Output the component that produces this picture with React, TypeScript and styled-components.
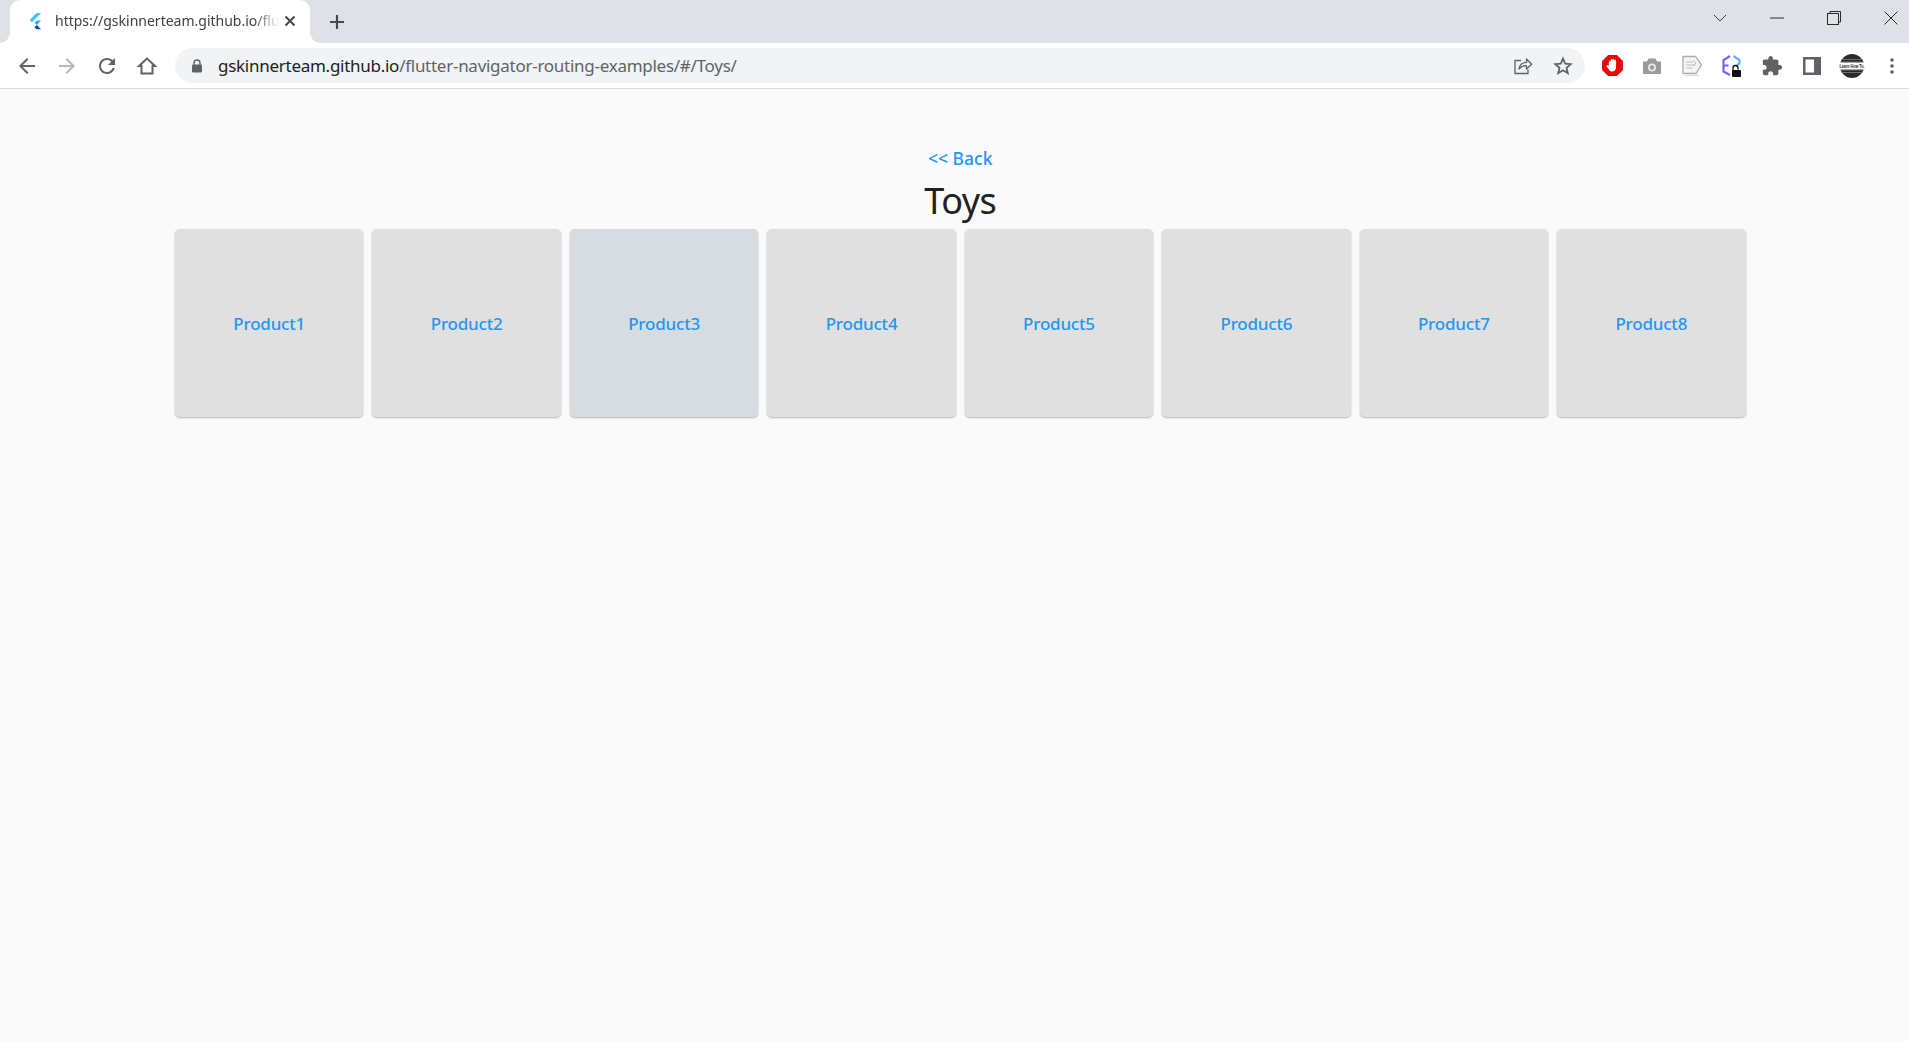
import React from "react";
import styled, { createGlobalStyle } from "styled-components";

const products = ["Product1", "Product2", "Product3", "Product4", "Product5", "Product6", "Product7", "Product8"];

const GlobalStyle = createGlobalStyle`
    html, body {
        margin: 0;
        padding: 0;
        width: 100%;
        height: 100%;
        overflow: hidden;
        background: #fafafa;
    }
    #root {
        height: 100%;
    }
`;

const Page = styled.div`
    display: flex;
    flex-direction: column;
    height: 100vh;
    font-family: "Noto Sans", "Open Sans", sans-serif;
`;

const TabStrip = styled.div`
    display: flex;
    align-items: stretch;
    height: 43px;
    padding-left: 10px;
    background: #dee1e6;
    flex: none;
`;

const Tab = styled.div`
    position: relative;
    display: flex;
    align-items: center;
    width: 300px;
    padding: 0 10px 2px 17px;
    box-sizing: border-box;
    background: #ffffff;
    border-radius: 10px 10px 0 0;
    flex: none;

    &::before,
    &::after {
        content: "";
        position: absolute;
        bottom: 0;
        width: 10px;
        height: 10px;
        background: radial-gradient(circle at var(--cx) 0, #dee1e6 9.5px, #ffffff 10px);
    }
    &::before {
        --cx: 0;
        left: -10px;
    }
    &::after {
        --cx: 100%;
        right: -10px;
    }
`;

const TabTitle = styled.span`
    flex: 1;
    min-width: 0;
    margin-left: 12px;
    overflow: hidden;
    white-space: nowrap;
    font-size: 14px;
    color: #3c4043;
    mask-image: linear-gradient(to right, #000 88%, transparent 100%);
`;

const IconSlot = styled.span<{ $width?: number; $height?: number }>`
    display: flex;
    align-items: center;
    justify-content: center;
    flex: none;
    width: ${(p) => p.$width ?? 40}px;
    height: ${(p) => p.$height ?? 36}px;
`;

const Spacer = styled.div`
    flex: 1;
`;

const WindowButton = styled.span`
    display: flex;
    align-items: center;
    justify-content: center;
    flex: none;
    width: 57px;
    height: 36px;
`;

const WindowButtons = styled.div`
    display: flex;
    margin-right: -10px;
`;

const Toolbar = styled.div`
    display: flex;
    align-items: center;
    height: 45px;
    padding-left: 7px;
    background: #ffffff;
    border-bottom: 1px solid #dadce0;
    flex: none;
`;

const Omnibox = styled.div`
    display: flex;
    align-items: center;
    flex: 0 0 1410px;
    height: 35px;
    margin: 0 7px 0 8px;
    padding: 0 2px 0 16px;
    box-sizing: border-box;
    border-radius: 18px;
    background: #f1f3f4;
`;

const Url = styled.div`
    flex: 1;
    margin-left: 15px;
    font-size: 17px;
    letter-spacing: -0.27px;
    white-space: nowrap;
    color: #5f6368;

    b {
        font-weight: 400;
        color: #202124;
    }
`;

const Main = styled.main`
    flex: 1;
    display: flex;
    flex-direction: column;
    align-items: center;
    padding: 57px 163.5px 0 175px;
    background: #fafafa;
`;

const BackLink = styled.a`
    font-size: 17.5px;
    font-weight: 500;
    line-height: 24px;
    color: #2196f3;
    cursor: pointer;
`;

const Title = styled.h1`
    margin: 5px 0 0;
    font-size: 36px;
    font-weight: 400;
    line-height: 51px;
    letter-spacing: -0.5px;
    color: #212121;
`;

const ProductGrid = styled.div`
    display: grid;
    grid-template-columns: repeat(8, 1fr);
    column-gap: 9px;
    width: 100%;
    margin-top: 3px;
`;

const ProductCard = styled.button<{ $hovered?: boolean }>`
    height: 188px;
    padding: 0;
    border: none;
    border-radius: 5px;
    background: ${(p) => (p.$hovered ? "#d7dce0" : "#e0e0e0")};
    box-shadow: 0 1px 2px rgba(0, 0, 0, 0.28);
    font-family: inherit;
    font-size: 17px;
    font-weight: 500;
    letter-spacing: -0.2px;
    color: #2196f3;
    cursor: pointer;
`;

const FlutterIcon = () => (
    <svg width="16" height="18" viewBox="0 0 16 18">
        <path d="M9.5 1h4.6L5 10.2 2.6 7.9z" fill="#42c5f5" />
        <path d="M9.5 8.6h4.6L9.8 13l-2.4-2.3z" fill="#42a5f5" />
        <path d="M7.4 15.2 9.8 13l4.3 4.2H9.5z" fill="#0d47a1" />
    </svg>
);

const CloseSmall = () => (
    <svg width="16" height="16" viewBox="0 0 16 16">
        <path d="m3.5 3.5 9 9m0-9-9 9" stroke="#45484c" strokeWidth="2" fill="none" />
    </svg>
);

const PlusIcon = () => (
    <svg width="16" height="16" viewBox="0 0 16 16">
        <path d="M8 1v14M1 8h14" stroke="#45484c" strokeWidth="2.2" fill="none" />
    </svg>
);

const MaterialIcon = ({ d, color = "#5f6368", size = 24 }: { d: string; color?: string; size?: number }) => (
    <svg width={size} height={size} viewBox="0 0 24 24">
        <path d={d} fill={color} />
    </svg>
);

const ARROW_BACK = "M20 11H7.83l5.59-5.59L12 4l-8 8 8 8 1.41-1.41L7.83 13H20v-2z";
const ARROW_FORWARD = "M4 11h12.17l-5.59-5.59L12 4l8 8-8 8-1.41-1.41L16.17 13H4v-2z";
const REFRESH =
    "M17.65 6.35C16.2 4.9 14.21 4 12 4c-4.42 0-7.99 3.58-7.99 8s3.57 8 7.99 8c3.73 0 6.84-2.55 7.73-6h-2.08c-.82 2.33-3.04 4-5.65 4-3.31 0-6-2.69-6-6s2.69-6 6-6c1.66 0 3.14.69 4.22 1.78L13 11h7V4l-2.35 2.35z";
const PUZZLE =
    "M20.5 11H19V7c0-1.1-.9-2-2-2h-4V3.5C13 2.12 11.88 1 10.5 1S8 2.12 8 3.5V5H4c-1.1 0-1.99.9-1.99 2v3.8H3.5c1.49 0 2.7 1.21 2.7 2.7s-1.21 2.7-2.7 2.7H2V20c0 1.1.9 2 2 2h3.8v-1.5c0-1.49 1.21-2.7 2.7-2.7 1.49 0 2.7 1.21 2.7 2.7V22H17c1.1 0 2-.9 2-2v-4h1.5c1.38 0 2.5-1.12 2.5-2.5S21.88 11 20.5 11z";

const HomeIcon = () => (
    <svg width="24" height="24" viewBox="0 0 24 24" fill="none">
        <path d="M12 4.5 4 12h2.5v7.5h11V12H20z" stroke="#5f6368" strokeWidth="2" strokeLinejoin="miter" />
    </svg>
);

const LockIcon = () => (
    <svg width="12" height="14" viewBox="0 0 12 14">
        <path d="M3 6V4a3 3 0 0 1 6 0v2" stroke="#5f6368" strokeWidth="1.4" fill="none" />
        <rect x="1" y="5.5" width="10" height="8" rx="1.2" fill="#5f6368" />
    </svg>
);

const ShareIcon = () => (
    <svg width="20" height="20" viewBox="0 0 20 20" fill="none" stroke="#5f6368" strokeWidth="1.3">
        <path d="M8 4.5H2v13h13v-4" />
        <path d="M6 13c.5-4 3-6.5 7.5-6.7V3l5.2 5.2-5.2 4.8V9.700c-3.500 0-5.700 1-7.500 3.300z" strokeLinejoin="round" />
    </svg>
);

const StarIcon = () => (
    <svg width="20" height="20" viewBox="0 0 20 20">
        <path
            d="m10 2.600 2.200 5.100 5.500.5-4.200 3.600 1.300 5.400L10 14.300l-4.800 2.900 1.300-5.400-4.200-3.600 5.500-.5z"
            fill="none"
            stroke="#5f6368"
            strokeWidth="1.800"
        />
    </svg>
);

const BlockerIcon = () => (
    <svg width="23" height="23" viewBox="0 0 22 22">
        <path d="M6.800 1h8.400L21 6.800v8.400L15.200 21H6.800L1 15.200V6.800z" fill="#e8090d" />
        <path
            d="M7.500 11V7.200a.9.9 0 0 1 1.700 0V10V5.700a.9.9 0 0 1 1.800 0V10V5.300a.9.9 0 0 1 1.700 0V10V6.200a.9.9 0 0 1 1.700 0v6.500c0 2.500-1.500 4-3.600 4-1.800 0-2.600-.8-3.300-2.200L5.300 12c-.5-1 .8-1.800 1.500-1z"
            fill="#ffffff"
        />
    </svg>
);

const CameraIcon = () => (
    <svg width="20" height="18" viewBox="0 0 20 18">
        <path d="M1 4.500h4L6.500 1.500h7L15 4.500h4V17H1z" fill="#9b9b9b" />
        <circle cx="10" cy="10.500" r="4" fill="#e8e8e8" />
        <circle cx="10" cy="10.500" r="2.200" fill="#9b9b9b" />
    </svg>
);

const NoteIcon = () => (
    <svg width="22" height="22" viewBox="0 0 22 22" fill="none">
        <path d="M2 1.500h12.500l6 8.500-5.500 8.500H2z" fill="#f5f5f5" stroke="#ababab" strokeWidth="1.300" />
        <path d="M5 7h7M5 10h9.500M5 13h6M12 5l3 3-3 3" stroke="#bcbcbc" strokeWidth="1" />
        <path d="M4 20.500h14" stroke="#dcdcdc" strokeWidth="1.200" />
    </svg>
);

const BracketLockIcon = () => (
    <svg width="22" height="24" viewBox="0 0 22 24" fill="none">
        <path d="M9 2 2.500 6v11.500L9 21" stroke="#7b61ff" strokeWidth="2.200" />
        <path d="M3 11.500h4.500" stroke="#7b61ff" strokeWidth="2" />
        <path d="m12.500 2 6 4v3.500l-3.500 2.500" stroke="#62b4f7" strokeWidth="2.200" />
        <path d="M11 19.500V15a2.500 2.500 0 0 1 5 0v1.500" stroke="#111111" strokeWidth="1.300" transform="translate(1 -1)" />
        <rect x="11" y="16" width="9" height="7" rx="1" fill="#111111" />
    </svg>
);

const SidePanelIcon = () => (
    <svg width="18" height="18" viewBox="0 0 18 18">
        <path fillRule="evenodd" d="M0 0h18v18H0zM2.500 2.500v13H11v-13z" fill="#5f6368" />
    </svg>
);

const ProfileBadge = () => (
    <svg width="28" height="28" viewBox="0 0 28 28">
        <circle cx="14" cy="14" r="12" fill="#2b2b2b" />
        <path d="M3 7.500h22M2 10h24M2 18h24M3 20.500h22" stroke="#8a8a8a" strokeWidth="0.700" />
        <rect x="0.500" y="10.500" width="27" height="7" rx="1" fill="#ffffff" />
        <text
            x="14"
            y="15.800"
            textAnchor="middle"
            fontSize="5"
            fontWeight="700"
            fontFamily="Liberation Sans"
            textLength="25"
            lengthAdjust="spacingAndGlyphs"
            fill="#222222"
        >
            Learn How To.
        </text>
    </svg>
);

const MoreIcon = () => (
    <svg width="6" height="18" viewBox="0 0 6 18">
        <circle cx="3" cy="3" r="1.800" fill="#5f6368" />
        <circle cx="3" cy="9" r="1.800" fill="#5f6368" />
        <circle cx="3" cy="15" r="1.800" fill="#5f6368" />
    </svg>
);

const TabStripBar = (): JSX.Element => {
    return (
        <TabStrip>
            <Tab>
                <FlutterIcon />
                <TabTitle>https://gskinnerteam.github.io/flutter-navigator</TabTitle>
                <IconSlot $width={20}>
                    <CloseSmall />
                </IconSlot>
            </Tab>
            <IconSlot $width={54} $height={43}>
                <PlusIcon />
            </IconSlot>
            <Spacer />
            <WindowButtons>
                <WindowButton>
                    <svg width="14" height="8" viewBox="0 0 14 8">
                        <path d="m1 1 6 6 6-6" stroke="#3c4043" strokeWidth="1" fill="none" />
                    </svg>
                </WindowButton>
                <WindowButton>
                    <svg width="14" height="2" viewBox="0 0 14 2">
                        <path d="M0 1h14" stroke="#2a2a2a" strokeWidth="1" />
                    </svg>
                </WindowButton>
                <WindowButton>
                    <svg width="14" height="14" viewBox="0 0 14 14" fill="none" stroke="#2a2a2a">
                        <rect x="0.500" y="2.500" width="11" height="11" />
                        <path d="M3 2.500V.5h10.500V11h-2" />
                    </svg>
                </WindowButton>
                <WindowButton>
                    <svg width="14" height="14" viewBox="0 0 14 14">
                        <path d="m.5.5 13 13m0-13-13 13" stroke="#2a2a2a" strokeWidth="1" fill="none" />
                    </svg>
                </WindowButton>
            </WindowButtons>
        </TabStrip>
    );
};

const BrowserToolbar = (): JSX.Element => {
    return (
        <Toolbar>
            <IconSlot>
                <MaterialIcon d={ARROW_BACK} />
            </IconSlot>
            <IconSlot>
                <MaterialIcon d={ARROW_FORWARD} color="#b5b7ba" />
            </IconSlot>
            <IconSlot>
                <MaterialIcon d={REFRESH} />
            </IconSlot>
            <IconSlot>
                <HomeIcon />
            </IconSlot>
            <Omnibox>
                <LockIcon />
                <Url>
                    <b>gskinnerteam.github.io</b>/flutter-navigator-routing-examples/#/Toys/
                </Url>
                <IconSlot>
                    <ShareIcon />
                </IconSlot>
                <IconSlot>
                    <StarIcon />
                </IconSlot>
            </Omnibox>
            <IconSlot>
                <BlockerIcon />
            </IconSlot>
            <IconSlot>
                <CameraIcon />
            </IconSlot>
            <IconSlot>
                <NoteIcon />
            </IconSlot>
            <IconSlot>
                <BracketLockIcon />
            </IconSlot>
            <IconSlot>
                <MaterialIcon d={PUZZLE} size={22} />
            </IconSlot>
            <IconSlot>
                <SidePanelIcon />
            </IconSlot>
            <IconSlot>
                <ProfileBadge />
            </IconSlot>
            <IconSlot>
                <MoreIcon />
            </IconSlot>
        </Toolbar>
    );
};

const App = (): JSX.Element => {
    return (
        <Page>
            <GlobalStyle />
            <TabStripBar />
            <BrowserToolbar />
            <Main>
                <BackLink>&lt;&lt; Back</BackLink>
                <Title>Toys</Title>
                <ProductGrid>
                    {products.map((product: string, index: number) => (
                        <ProductCard key={product} $hovered={index === 2}>
                            {product}
                        </ProductCard>
                    ))}
                </ProductGrid>
            </Main>
        </Page>
    );
};

export default App;
